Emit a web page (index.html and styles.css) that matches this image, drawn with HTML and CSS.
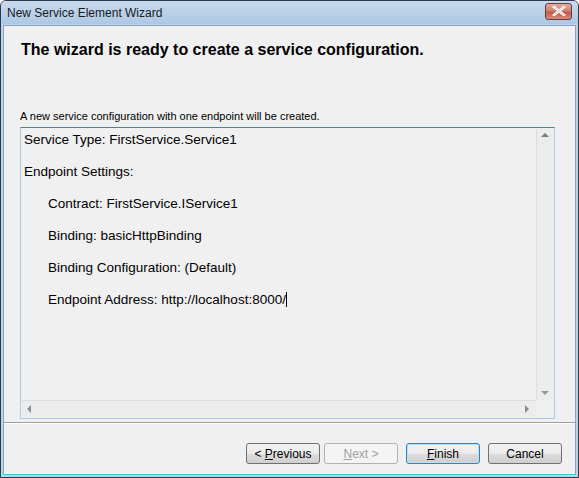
FILE: index.html
```html
<!DOCTYPE html>
<html lang="en">

<head>
    <meta charset="UTF-8">
    <title>New Service Element Wizard</title>
    <link rel="stylesheet" href="styles.css">
</head>

<body>
    <div class="window">
        <div class="titlebar">
            <span class="title">New Service Element Wizard</span>
            <div class="close-btn">
                <svg width="14" height="10" viewBox="0 0 14 10">
                    <path d="M2 1 L12 9 M12 1 L2 9" stroke="#ffffff" stroke-width="2.6" stroke-linecap="square" />
                    <path d="M2 1 L12 9 M12 1 L2 9" stroke="#6a6a6a" stroke-width="0.6" fill="none" opacity="0.5" />
                </svg>
            </div>
        </div>
        <div class="client">
            <h1 class="heading">The wizard is ready to create a service configuration.</h1>
            <div class="info">A new service configuration with one endpoint will be created.</div>
            <div class="summary">
                <div class="summary-text">
                    <p>Service Type: FirstService.Service1</p>
                    <p>Endpoint Settings:</p>
                    <p class="indent">Contract: FirstService.IService1</p>
                    <p class="indent">Binding: basicHttpBinding</p>
                    <p class="indent">Binding Configuration: (Default)</p>
                    <p class="indent">Endpoint Address: http://localhost:8000/<span class="caret"></span></p>
                </div>
                <div class="vscroll">
                    <span class="arrow arrow-up"></span>
                    <span class="arrow arrow-down"></span>
                </div>
                <div class="hscroll">
                    <span class="arrow arrow-left"></span>
                    <span class="arrow arrow-right"></span>
                </div>
                <div class="corner"></div>
            </div>
            <div class="separator"></div>
            <div class="buttons">
                <div class="btn"><span>&lt; <u>P</u>revious</span></div>
                <div class="btn disabled"><span><u>N</u>ext &gt;</span></div>
                <div class="btn default gap-left"><span><u>F</u>inish</span></div>
                <div class="btn gap-left"><span>Cancel</span></div>
            </div>
        </div>
    </div>
</body>

</html>
```

FILE: styles.css
```css
body {
    margin: 0;
    background-color: #ffffff;
    font-family: 'Liberation Sans', Arial, sans-serif;
}

.window {
    width: 579px;
    height: 478px;
    box-sizing: border-box;
    border: 1px solid #2c3a4c;
    border-radius: 6px 6px 0 0;
    background: #bcd2ea;
    display: flex;
    flex-direction: column;
    overflow: hidden;
}

.titlebar {
    height: 23px;
    flex-shrink: 0;
    display: flex;
    align-items: center;
    justify-content: space-between;
    padding: 0 6px 0 6px;
    background: linear-gradient(#c9dbee, #b7cfe8 60%, #aec8e4);
}

.title {
    font-size: 12px;
    color: #1a1a1a;
    padding-top: 1px;
}

.close-btn {
    width: 25px;
    height: 15px;
    border: 1px solid #6b3a3a;
    border-radius: 3px;
    background: linear-gradient(#e2b0a4, #d08070 45%, #c25a46 55%, #d68c78);
    display: flex;
    justify-content: center;
    align-items: center;
    margin-top: -3px;
}

.client {
    flex: 1;
    margin: 1px 2px 2px 2px;
    border: 1px solid #8aa4c2;
    border-bottom: 1px solid #3fc4e0;
    background-color: #f0f0f0;
    padding: 0 0 0 16px;
    display: flex;
    flex-direction: column;
}

.heading {
    margin: 14px 0 0 1px;
    font-size: 16px;
    font-weight: bold;
    color: #000000;
    line-height: 20px;
}

.info {
    margin-top: 50px;
    font-size: 11px;
    line-height: 13px;
    color: #000000;
}

.summary {
    margin-top: 4px;
    width: 535px;
    height: 292px;
    box-sizing: border-box;
    border: 1px solid #a9c9e8;
    border-top: 1px solid #3f83c0;
    display: grid;
    grid-template-columns: 1fr 17px;
    grid-template-rows: 1fr 17px;
    padding: 1px;
}

.summary-text {
    padding: 3px 0 0 2px;
    font-size: 13.5px;
    color: #000000;
    overflow: hidden;
}

.summary-text p {
    margin: 0 0 16px 0;
    line-height: 16px;
    white-space: nowrap;
}

.summary-text .indent {
    padding-left: 24px;
}

.caret {
    display: inline-block;
    width: 1px;
    height: 15px;
    background: #000000;
    vertical-align: -3px;
}

.vscroll {
    border-left: 1px solid #dcdcdc;
    background: #ececec;
    position: relative;
}

.hscroll {
    border-top: 1px solid #dcdcdc;
    background: #ececec;
    position: relative;
}

.corner {
    background: #f0f0f0;
}

.arrow {
    position: absolute;
    width: 0;
    height: 0;
    border: 4px solid transparent;
}

.arrow-up {
    top: 4px;
    left: 4px;
    border-bottom-color: #7a7a7a;
    border-top-width: 0;
}

.arrow-down {
    bottom: 5px;
    left: 4px;
    border-top-color: #9a9a9a;
    border-bottom-width: 0;
}

.arrow-left {
    left: 5px;
    top: 4px;
    border-right-color: #8a8a8a;
    border-left-width: 0;
}

.arrow-right {
    right: 7px;
    top: 4px;
    border-left-color: #8a8a8a;
    border-right-width: 0;
}

.separator {
    margin: 3px 0 0 -16px;
    height: 1px;
    background: #a0a0a0;
    border-bottom: 1px solid #ffffff;
}

.buttons {
    display: flex;
    justify-content: flex-end;
    margin-top: 19px;
    padding-right: 13px;
    gap: 4px;
}

.btn {
    width: 74px;
    height: 21px;
    box-sizing: border-box;
    border: 1px solid #707070;
    border-radius: 3px;
    background: linear-gradient(#f2f2f2, #ebebeb 50%, #dddddd 51%, #cfcfcf);
    display: flex;
    justify-content: center;
    align-items: center;
    font-size: 12px;
    color: #000000;
}

.btn u {
    text-decoration-thickness: 1px;
}

.btn.gap-left {
    margin-left: 4px;
}

.btn.default {
    border-color: #3c7fb1;
    box-shadow: inset 0 0 0 1px #b5e2f6;
}

.btn.disabled {
    border-color: #adb2b5;
    background: #f4f4f4;
    color: #a0a0a0;
}
```
